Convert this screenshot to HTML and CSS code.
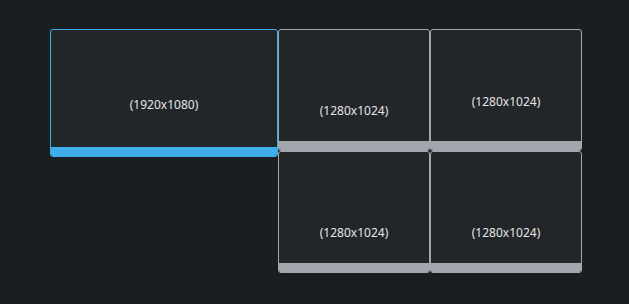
FILE: index.html
```html
<!DOCTYPE html>
<html lang="en">
<head>
  <meta charset="UTF-8" />
  <meta name="viewport" content="width=device-width, initial-scale=1.0"/>
  <title>Display Configuration</title>
  <link rel="stylesheet" href="styles.css">
</head>
<body>
  <div class="arrangement">
    <!-- primary output -->
    <div class="screen primary wide">
      <div class="label near">(1920x1080)</div>
      <div class="bar"></div>
    </div>

    <div class="screen">
      <div class="label far">(1280x1024)</div>
      <div class="bar"></div>
    </div>

    <div class="screen">
      <div class="label high">(1280x1024)</div>
      <div class="bar"></div>
    </div>

    <div class="screen second-row">
      <div class="label far">(1280x1024)</div>
      <div class="bar"></div>
    </div>

    <div class="screen second-row">
      <div class="label far">(1280x1024)</div>
      <div class="bar"></div>
    </div>
  </div>
</body>
</html>
```

FILE: styles.css
```css
body {
  margin: 0;
  padding: 0;
  background: #1b1e20;
  font-family: "Noto Sans", "Open Sans", sans-serif;
}

.arrangement {
  display: grid;
  grid-template-columns: 228px 152px 152px;
  grid-template-rows: 122px 122px;
  padding: 29px 0 0 50px;
}

.screen {
  box-sizing: border-box;
  display: flex;
  flex-direction: column;
  border: 1px solid #a1a7ac;
  border-radius: 3px;
  background: #232629;
  overflow: hidden;
}

.screen.wide {
  grid-row: 1 / span 2;
  height: 128px;
  align-self: start;
}

.screen.second-row {
  grid-row: 2;
}

.screen.wide + .screen {
  grid-column: 2;
}

.screen.primary {
  border-color: #3daee9;
}

.label {
  flex: 1;
  text-align: center;
  font-size: 12px;
  line-height: 16px;
  color: #e3e5e7;
}

.label.near {
  padding-top: 67px;
}

.label.high {
  padding-top: 64px;
}

.label.far {
  padding-top: 73px;
}

.bar {
  height: 9px;
  background: #a1a7ac;
}

.primary .bar {
  background: #3daee9;
}
```
